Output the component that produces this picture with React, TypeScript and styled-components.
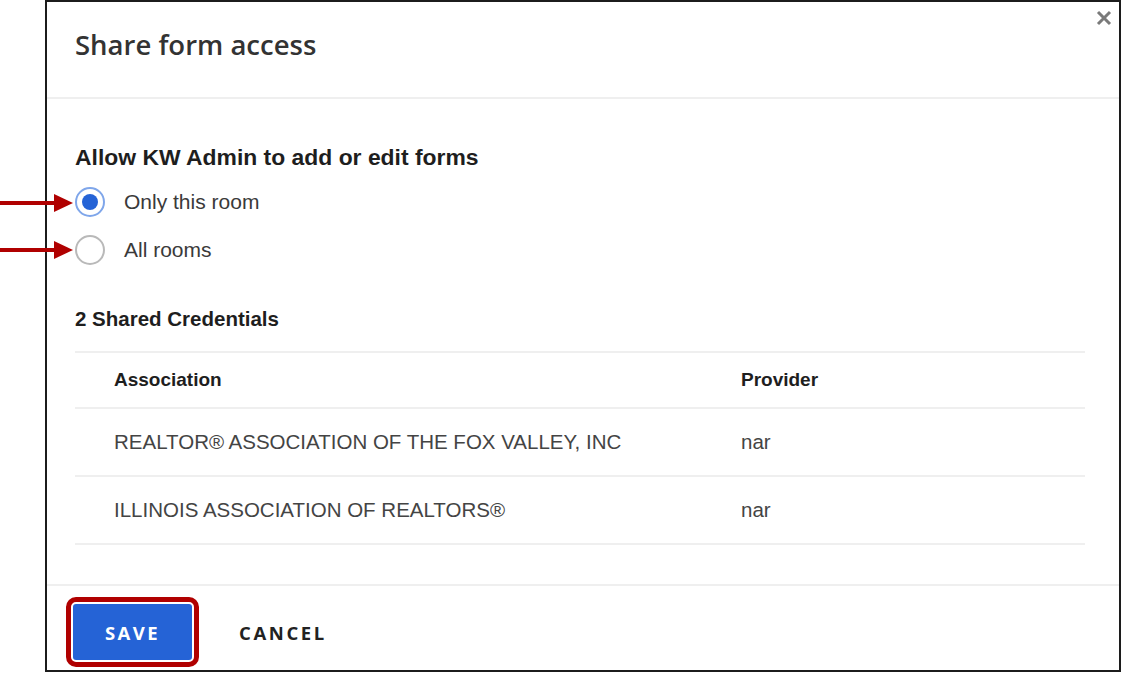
import styled, { createGlobalStyle } from "styled-components"

const GlobalStyle = createGlobalStyle`
  html, body {
    margin: 0;
    padding: 0;
    background: #ffffff;
  }
  * {
    box-sizing: border-box;
  }
`

const Page = styled.div`
  position: relative;
  width: 1122px;
  height: 673px;
  padding-left: 45px;
  overflow: hidden;
`

const Modal = styled.div`
  position: relative;
  width: 1076px;
  height: 672px;
  border: 2px solid #1c1c1c;
  display: flex;
  flex-direction: column;
  background: #fff;
`

const Header = styled.div`
  height: 97px;
  display: flex;
  align-items: center;
  padding: 0 28px 10px;
  border-bottom: 2px solid #efefef;
`

const Title = styled.h1`
  margin: 0;
  font-family: "Open Sans", "Noto Sans", sans-serif;
  font-size: 27.5px;
  font-weight: 600;
  color: #333;
`

const Close = styled.button`
  position: absolute;
  top: 4px;
  right: 3px;
  width: 24px;
  height: 24px;
  padding: 0;
  border: none;
  background: none;
  display: flex;
  align-items: center;
  justify-content: center;
`

const Body = styled.div`
  flex: 1;
  padding: 44px 34px 0 28px;
  font-family: "Liberation Sans", Arial, sans-serif;
  border-bottom: 2px solid #efefef;
`

const Heading = styled.h2`
  margin: 0 0 16px;
  font-size: 22.9px;
  font-weight: 700;
  color: #1e1e1e;
  line-height: 28px;
`

const Options = styled.div`
  display: flex;
  flex-direction: column;
  gap: 18px;
`

const Option = styled.label`
  display: flex;
  align-items: center;
  gap: 19px;
  font-size: 21px;
  color: #3a3a3a;
  height: 30px;
`

const Radio = styled.span<{ $checked?: boolean }>`
  width: 30px;
  height: 30px;
  border-radius: 50%;
  border: 2px solid ${(p) => (p.$checked ? "#7fa6ea" : "#b9b9b9")};
  display: flex;
  align-items: center;
  justify-content: center;
  &::after {
    content: "";
    width: 16px;
    height: 16px;
    border-radius: 50%;
    background: ${(p) => (p.$checked ? "#2563d6" : "transparent")};
  }
`

const SubHeading = styled.h3`
  margin: 42px 0 20px;
  font-size: 20.5px;
  font-weight: 700;
  color: #1e1e1e;
  line-height: 24px;
`

const Table = styled.div`
  border-top: 2px solid #efefef;
`

const Row = styled.div<{ $head?: boolean }>`
  display: grid;
  grid-template-columns: 627px 1fr;
  align-items: center;
  height: ${(p) => (p.$head ? "56px" : "68px")};
  padding-left: 39px;
  border-bottom: 2px solid #efefef;
  font-size: ${(p) => (p.$head ? "19px" : "20.5px")};
  font-weight: ${(p) => (p.$head ? 700 : 400)};
  color: ${(p) => (p.$head ? "#1e1e1e" : "#444")};
`

const Footer = styled.div`
  height: 84px;
  display: flex;
  align-items: center;
  gap: 40px;
  padding: 8px 0 0 19px;
`

const Highlight = styled.span`
  display: inline-flex;
  padding: 2px;
  border: 5px solid #b00000;
  border-radius: 10px;
`

const SaveButton = styled.button`
  width: 119px;
  height: 56px;
  border: none;
  border-radius: 3px;
  background: #2563d6;
  color: #fff;
  font-family: "Open Sans", "Noto Sans", sans-serif;
  font-size: 18.5px;
  font-weight: 700;
  letter-spacing: 2.4px;
`

const CancelButton = styled.button`
  border: none;
  background: none;
  padding: 0;
  color: #222;
  font-family: "Open Sans", "Noto Sans", sans-serif;
  font-size: 18.5px;
  font-weight: 700;
  letter-spacing: 2.6px;
`

const Arrow = styled.svg<{ $top: number }>`
  position: absolute;
  left: 0;
  top: ${(p) => p.$top}px;
`

function RedArrow({ top }: { top: number }) {
  return (
    <Arrow $top={top} width="74" height="22" viewBox="0 0 74 22">
      <rect x="0" y="9" width="58" height="4" fill="#b00000" />
      <polygon points="54,2 73,11 54,20" fill="#b00000" />
    </Arrow>
  )
}

const rows = [
  { association: "REALTOR® ASSOCIATION OF THE FOX VALLEY, INC", provider: "nar" },
  { association: "ILLINOIS ASSOCIATION OF REALTORS®", provider: "nar" }
]

export default function App() {
  return (
    <>
      <GlobalStyle />
      <Page>
        <Modal>
          <Header>
            <Title>Share form access</Title>
          </Header>
          <Close aria-label="Close">
            <svg width="16" height="16" viewBox="0 0 16 16">
              <path d="M2 2L14 14M14 2L2 14" stroke="#7a7a7a" strokeWidth="3" />
            </svg>
          </Close>
          <Body>
            <Heading>Allow KW Admin to add or edit forms</Heading>
            <Options>
              <Option>
                <Radio $checked />
                Only this room
              </Option>
              <Option>
                <Radio />
                All rooms
              </Option>
            </Options>
            <SubHeading>2 Shared Credentials</SubHeading>
            <Table>
              <Row $head>
                <span>Association</span>
                <span>Provider</span>
              </Row>
              {rows.map((r) => (
                <Row key={r.association}>
                  <span>{r.association}</span>
                  <span>{r.provider}</span>
                </Row>
              ))}
            </Table>
          </Body>
          <Footer>
            <Highlight>
              <SaveButton>SAVE</SaveButton>
            </Highlight>
            <CancelButton>CANCEL</CancelButton>
          </Footer>
        </Modal>
        <RedArrow top={192} />
        <RedArrow top={239} />
      </Page>
    </>
  )
}
